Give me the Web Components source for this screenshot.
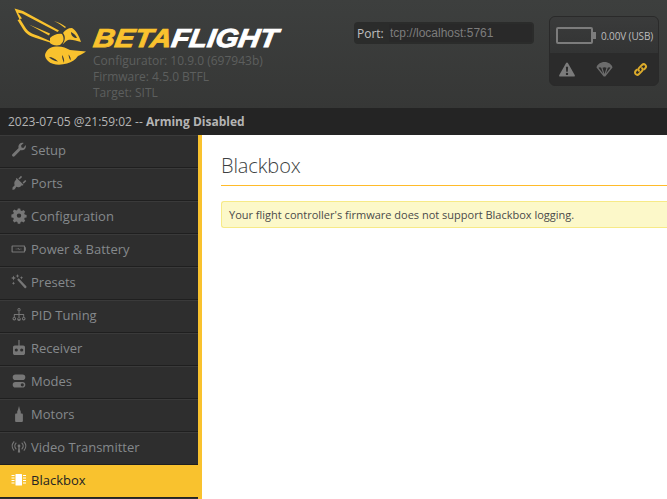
<!DOCTYPE html>
<html>
<head>
<meta charset="utf-8">
<title>Betaflight Configurator</title>
<style>
  html, body { margin: 0; height: 100%; overflow: hidden; background: #fff; }
  body { font-family: "Open Sans", sans-serif; }
  bf-app { height: 499px; }
</style>
</head>
<body>
<bf-app>
  <bf-header>
    <bf-logo slot="logo"></bf-logo>
    <bf-port slot="port" value="tcp://localhost:5761"></bf-port>
    <bf-status slot="status"></bf-status>
  </bf-header>
  <bf-log>2023-07-05 @21:59:02 -- <b>Arming Disabled</b></bf-log>
  <div style="display:flex;flex:1;min-height:0">
    <bf-nav>
      <bf-nav-item icon="setup">Setup</bf-nav-item>
      <bf-nav-item icon="ports">Ports</bf-nav-item>
      <bf-nav-item icon="config">Configuration</bf-nav-item>
      <bf-nav-item icon="power">Power &amp; Battery</bf-nav-item>
      <bf-nav-item icon="presets">Presets</bf-nav-item>
      <bf-nav-item icon="pid">PID Tuning</bf-nav-item>
      <bf-nav-item icon="receiver">Receiver</bf-nav-item>
      <bf-nav-item icon="modes">Modes</bf-nav-item>
      <bf-nav-item icon="motors">Motors</bf-nav-item>
      <bf-nav-item icon="video">Video Transmitter</bf-nav-item>
      <bf-nav-item icon="blackbox" active>Blackbox</bf-nav-item>
    </bf-nav>
    <bf-tab heading="Blackbox">
      <bf-note>Your flight controller's firmware does not support Blackbox logging.</bf-note>
    </bf-tab>
  </div>
</bf-app>

<script>
const ICONS = {
  setup: '<path d="M14.700 3c.5 1.600.1 3.100-1 4.200-1.100 1-2.600 1.400-4 .9l-5.900 6c-.7.7-1.700.7-2.300.1s-.6-1.600.1-2.300l6-5.900c-.5-1.400-.1-2.900.9-4C9.600.900 11.100.5 12.700 1L10.100 3.600l.4 1.900 1.900.4z"/>',
  ports: '<path d="M1.500 15v-2.600l2.200-2.200C2.900 8.600 3.300 6.600 4.600 5.300l.8-.8-.6-.6.9-.9 6.800 6.800-.9.9-.6-.6-.8.8c-1.300 1.300-3.300 1.700-4.900.9L3.800 14.300z"/><path d="M7.400 3.400L10 .8l1.100 1.100-2.600 2.600zM11.600 7.600l2.600-2.600 1.100 1.100-2.600 2.600z"/>',
  config: '<path fill-rule="evenodd" d="M6.800 .6h2.400l.4 1.900 1.300.5 1.600-1 1.700 1.700-1 1.600.5 1.300 1.900.4v2.400l-1.900.4-.5 1.300 1 1.600-1.700 1.700-1.600-1-1.300.5-.4 1.900H6.800l-.4-1.900-1.300-.5-1.600 1-1.700-1.700 1-1.600-.5-1.300-1.900-.4V6.400l1.900-.4.5-1.300-1-1.600 1.700-1.700 1.600 1 1.300-.5zM8 5.400a2.200 2.200 0 1 0 0 4.400 2.200 2.200 0 0 0 0-4.400z"/>',
  power: '<path fill-rule="evenodd" d="M1.500 4.500h11.600c.6 0 1 .4 1 1v.7h.8v3.600h-.8v.7c0 .6-.4 1-1 1H1.500c-.6 0-1-.4-1-1V5.500c0-.6.4-1 1-1zm.2 1.100v4.800h11.200V5.600z"/><path d="M4.500 7.700h2l.9-.9.8 1.400.5-.5h2v.6H8.900l-.9.9-.8-1.400-.5.5h-2.200z"/>',
  presets: '<path d="M6.200 5.700l1.500-1.400 7.600 7.900c.4.400.4.900 0 1.300l-.4.400c-.4.400-.9.300-1.300 0z"/><path d="M2.500 1.500l.7 1.800 1.800.7-1.800.7-.7 1.800-.7-1.800L0 4l1.800-.7zM6.500 0l.6 1.400 1.400.6-1.400.6-.6 1.400-.6-1.400L4.500 2l1.400-.6zM10.500 2l.5 1.200 1.200.5-1.200.5-.5 1.200-.5-1.200-1.200-.5 1.200-.5zM2.500 7.500l.5 1.200 1.200.5-1.200.5-.5 1.200-.5-1.200-1.200-.5 1.200-.5z"/>',
  pid: '<path fill-rule="evenodd" d="M8 1a1.700 1.700 0 0 1 .5 3.300v2.700h4.100c.4 0 .6.300.6.600v2.300a1.800 1.800 0 1 1-1 0V8H8.500v2.400a1.800 1.800 0 1 1-1 0V8H3.800v1.900a1.800 1.800 0 1 1-1 0V7.600c0-.3.200-.6.600-.6h4.100V4.300A1.700 1.700 0 0 1 8 1zm0 1a.7.700 0 1 0 0 1.400A.7.700 0 0 0 8 2zM3.300 10.800a.8.800 0 1 0 0 1.600.8.800 0 0 0 0-1.600zm4.700 0a.8.800 0 1 0 0 1.600.8.800 0 0 0 0-1.600zm4.700 0a.8.800 0 1 0 0 1.600.8.800 0 0 0 0-1.600z"/>',
  receiver: '<path fill-rule="evenodd" d="M7.400 0h1.200v5.500h3.600c1 0 1.800.8 1.800 1.800v5.900c0 1-.8 1.800-1.800 1.800H3.800c-1 0-1.800-.8-1.800-1.800V7.300c0-1 .8-1.800 1.800-1.800h3.600zM5.300 8.400a1.600 1.600 0 1 0 0 3.200 1.600 1.600 0 0 0 0-3.200zm5.400 0a1.600 1.600 0 1 0 0 3.200 1.600 1.600 0 0 0 0-3.200z"/>',
  modes: '<path fill-rule="evenodd" d="M4.500 1.500h7a2.800 2.800 0 0 1 0 5.600h-7a2.800 2.800 0 0 1 0-5.600zm0 7.500h7a2.800 2.800 0 0 1 0 5.600h-7a2.800 2.800 0 0 1 0-5.600zm6.800 1.200a1.600 1.600 0 1 0 0 3.200 1.600 1.600 0 0 0 0-3.200z"/>',
  motors: '<path d="M8 0c.4 1.400.7 2.400 1 3.800.2.800.8 1.200.8 2.200V7.500h.9c.7 0 1.200.5 1.200 1.200V15c0 .5-.4.900-.9.900H5c-.5 0-.9-.4-.9-.9V8.700c0-.7.500-1.200 1.200-1.200h.9V6c0-1 .6-1.400.8-2.200C7.300 2.400 7.600 1.400 8 0z"/>',
  video: '<circle cx="8" cy="7" r="1.400"/><path d="M7.500 7.500h1l.7 6H6.800z"/><path fill="none" stroke="currentColor" stroke-width="1.200" stroke-linecap="round" d="M5 4.200a4 4 0 0 0 0 5.600M11 4.200a4 4 0 0 1 0 5.600M2.800 2.800a6.500 6.500 0 0 0 0 8.400M13.200 2.800a6.500 6.500 0 0 1 0 8.400"/>',
  blackbox: '<rect x="4.500" y="2" width="6.500" height="11.500" rx=".5" fill="#fff"/><path d="M.5 3h3v1H.5zM.5 5.500h3v1H.5zM.5 8h3v1H.5zM.5 10.500h3v1H.5zM12 3h3v1h-3zM12 5.500h3v1h-3zM12 8h3v1h-3zM12 10.500h3v1h-3z" fill="#fff"/>'
};

class BfApp extends HTMLElement {
  constructor() {
    super();
    this.attachShadow({ mode: 'open' }).innerHTML = `
      <style>:host { display: flex; flex-direction: column; }</style>
      <slot></slot>`;
  }
}

class BfHeader extends HTMLElement {
  constructor() {
    super();
    this.attachShadow({ mode: 'open' }).innerHTML = `
      <style>
        :host {
          display: flex; align-items: flex-start; height: 108px; flex: none; box-sizing: border-box;
          background: linear-gradient(#3d3f3e, #363736);
        }
        .logo { width: 354px; flex: none; }
        .port { width: 195px; flex: none; padding-top: 22px; box-sizing: border-box; }
        .status { padding-top: 16px; }
      </style>
      <div class="logo"><slot name="logo"></slot></div>
      <div class="port"><slot name="port"></slot></div>
      <div class="status"><slot name="status"></slot></div>`;
  }
}

class BfLogo extends HTMLElement {
  constructor() {
    super();
    this.attachShadow({ mode: 'open' }).innerHTML = `
      <style>
        :host { display: flex; height: 108px; position: relative; }
        svg { position: absolute; left: 0; top: 0; }
        .col { margin-left: 93px; display: flex; flex-direction: column; padding-top: 24px; }
        .word {
          font: italic 700 26px/28px "Liberation Sans", sans-serif; color: #fff;
          -webkit-text-stroke: .9px currentColor; transform-origin: 0 14px; transform: scaleX(1.13) skewX(-8deg);
          white-space: nowrap; height: 29px; margin-left: 1px;
        }
        .word span { color: #f9c22e; }
        .info { font-size: 12px; line-height: 16px; color: #5d5f5e; white-space: nowrap; }
      </style>
      <svg width="93" height="75" viewBox="0 0 93 75" fill="#f9c22e">
        <path d="M14.500 8.500L23 11 59 30.500 57.500 32 22 13.500 18 12.800 22 18.500 20 19 25 27C28 32 32 34 38 35.800L50 41V42.500L36 38C30 36.200 26 34 23 29L17.500 20 19.500 19.500z"/>
        <path d="M29 24.500L50 33.500 49 35.500z"/>
        <path d="M54 21C58 22 62 24 66 27L65 28C62 25.500 58 23 54 21z"/>
        <path d="M50 38C53 35 58 33 62 34 64.500 38 64 42 60 45 56 46 52 45 50 43z"/>
        <path fill-rule="evenodd" d="M63 33C65 30 68 28 72 28 76 30 79 36 81 42 76 41 72 39 68 40 66 41 65 42 62.500 44.500 65.500 40 65.500 36 63 33zM71 32C71 36 74 38 77 38 76 35 73 33 71 32z"/>
        <path fill-rule="evenodd" d="M45 55C46 50 50 47 56 46.500 62 46 66 48 70 50L86 51.500C83 54 80 55 78 56 75 60 72 62 67 63.500 60 65.500 52 65 48 61 46 59 45 57 45 55zM49 57C52 57.200 55 58.500 58 61.500 54.500 61 51 59.500 49 57zM62 55C63.500 57 64.500 59.500 64 63 63 60.500 62 58 62 55zM68.500 54.500C70 56 71 58 70.500 60.500 69.500 59 68.800 57 68.500 54.500z"/>
      </svg>
      <div class="col">
        <div class="word"><span>BETA</span>FLIGHT</div>
        <div class="info">Configurator: 10.9.0 (697943b)</div>
        <div class="info">Firmware: 4.5.0 BTFL</div>
        <div class="info">Target: SITL</div>
      </div>`;
  }
}

class BfPort extends HTMLElement {
  constructor() {
    super();
    this.attachShadow({ mode: 'open' }).innerHTML = `
      <style>
        :host {
          display: flex; align-items: center; width: 180px; height: 22px; box-sizing: border-box;
          background: #2b2c2b; border-radius: 4px; padding: 0 2px 0 3px; font-size: 12px;
        }
        label { color: #c0c0c0; width: 32px; flex: none; }
        .val { flex: 1; background: #292929; height: 18px; line-height: 18px; padding-left: 1px; color: #7d7d7d;
          font-family: "Liberation Sans", sans-serif; }
      </style>
      <label>Port:</label><div class="val"></div>`;
    this.shadowRoot.querySelector('.val').textContent = this.getAttribute('value');
  }
}

class BfStatus extends HTMLElement {
  constructor() {
    super();
    this.attachShadow({ mode: 'open' }).innerHTML = `
      <style>
        :host {
          display: flex; flex-direction: column; width: 110px; height: 70px; box-sizing: border-box;
          border: 1px solid #2a2a2a; border-radius: 6px; overflow: hidden; background: #2b2b2b;
        }
        .top { height: 36px; flex: none; display: flex; align-items: center; padding-left: 6px; gap: 8px;
          background: linear-gradient(#3a3b3b, #333434); }
        .batt { width: 37px; height: 17px; box-sizing: border-box; border: 2px solid #7c7c7c; border-radius: 2px; position: relative; flex: none; }
        .batt::after { content: ""; position: absolute; right: -5px; top: 3px; width: 3px; height: 7px; background: #7c7c7c; }
        .v { font-size: 10px; color: #bdbdbd; letter-spacing: -.12px; white-space: nowrap; padding-top: 1px; }
        .icons { flex: 1; display: flex; align-items: center; justify-content: space-between; padding: 0 10px 0 9px; }
      </style>
      <div class="top"><div class="batt"></div><div class="v">0.00V (USB)</div></div>
      <div class="icons">
        <svg width="16" height="15" viewBox="0 0 16 15" fill="#7b7b7b"><path fill-rule="evenodd" d="M8 .500c.4 0 .7.200.9.600l6.800 12c.4.700 0 1.500-.9 1.500H1.200c-.9 0-1.300-.8-.9-1.500l6.800-12c.2-.4.500-.6.900-.6zM6.900 4.800l.3 5h1.600l.3-5zM8 10.700a1.200 1.200 0 1 0 0 2.400 1.200 1.200 0 0 0 0-2.400z"/></svg>
        <svg width="17" height="15" viewBox="0 0 17 15" fill="#6c6c6c"><path fill-rule="evenodd" d="M8.500 0c4 0 7.300 2.400 8 5.500L9.300 14.500H7.700L.5 5.500c.7-3.100 4-5.500 8-5.500zM2.500 5.800l4.700 5.900-2-5.900c-.9-.7-1.800-.7-2.700 0zm4 0l2 6.300 2-6.300c-1.300-.7-2.700-.7-4 0zm5.300 0l-2 5.900 4.700-5.900c-.9-.7-1.800-.7-2.700 0z"/></svg>
        <svg width="15" height="15" viewBox="0 0 15 15" fill="none" stroke="#dcab2b" stroke-width="2" stroke-linecap="round"><path d="M6 8.900c-.9-.9-.8-2.100.1-3l2.900-2.900c1-1 2.400-1 3.300-.1.900.9.900 2.300-.1 3.300l-1 1"/><path d="M9 6.100c.9.900.8 2.100-.1 3l-2.900 2.900c-1 1-2.400 1-3.300.1-.9-.9-.9-2.300.1-3.300l1-1"/></svg>
      </div>`;
  }
}

class BfLog extends HTMLElement {
  constructor() {
    super();
    this.attachShadow({ mode: 'open' }).innerHTML = `
      <style>
        :host { display: flex; align-items: center; height: 27px; flex: none; padding-left: 8px;
          background: #242424; color: #b4b4b4; font-size: 12px; white-space: pre; }
      </style>
      <div><slot></slot></div>`;
  }
}

class BfNav extends HTMLElement {
  constructor() {
    super();
    this.attachShadow({ mode: 'open' }).innerHTML = `
      <style>
        :host { display: flex; flex-direction: column; width: 202px; flex: none; box-sizing: border-box;
          background: #2e2e2e; border-right: 4px solid #f9c22e; overflow: hidden; }
      </style>
      <slot></slot>`;
  }
}

class BfNavItem extends HTMLElement {
  constructor() {
    super();
    const on = this.hasAttribute('active');
    this.attachShadow({ mode: 'open' }).innerHTML = `
      <style>
        :host { display: flex; align-items: center; height: 33px; flex: none; box-sizing: border-box;
          padding: 0 0 4px 11px; gap: 4px; font-size: 13px; color: #85898c;
          border-top: 1px solid #3a3a3a; border-bottom: 1px solid #1f1f1f; }
        :host([active]) { background: #f9c22e; color: #242424; border-top-color: #f9c22e; border-bottom-color: #242424; }
        svg { flex: none; fill: ${on ? '#fff' : '#767676'}; color: #767676; }
      </style>
      <svg width="16" height="16" viewBox="0 0 16 16">${ICONS[this.getAttribute('icon')]}</svg>
      <slot></slot>`;
  }
}

class BfTab extends HTMLElement {
  constructor() {
    super();
    this.attachShadow({ mode: 'open' }).innerHTML = `
      <style>
        :host { display: block; flex: 1; min-width: 0; padding: 14px 0 0 19px; background: #fff; }
        h1 { margin: 0 0 15px; height: 37px; box-sizing: border-box; font-size: 20px; font-weight: 300; line-height: 34px;
          letter-spacing: -.1px; color: #3d3f42; border-bottom: 1px solid #ffbb2a; }
      </style>
      <h1></h1><slot></slot>`;
    this.shadowRoot.querySelector('h1').textContent = this.getAttribute('heading');
  }
}

class BfNote extends HTMLElement {
  constructor() {
    super();
    this.attachShadow({ mode: 'open' }).innerHTML = `
      <style>
        :host { display: flex; align-items: center; height: 27px; box-sizing: border-box; padding-left: 7px;
          background: #fcf8c9; border: 1px solid #f7ea87; border-right: 0; border-radius: 3px 0 0 3px;
          font-size: 11px; color: #4a4a4a; white-space: nowrap; }
      </style>
      <slot></slot>`;
  }
}

customElements.define('bf-app', BfApp);
customElements.define('bf-header', BfHeader);
customElements.define('bf-logo', BfLogo);
customElements.define('bf-port', BfPort);
customElements.define('bf-status', BfStatus);
customElements.define('bf-log', BfLog);
customElements.define('bf-nav', BfNav);
customElements.define('bf-nav-item', BfNavItem);
customElements.define('bf-tab', BfTab);
customElements.define('bf-note', BfNote);
</script>
</body>
</html>
